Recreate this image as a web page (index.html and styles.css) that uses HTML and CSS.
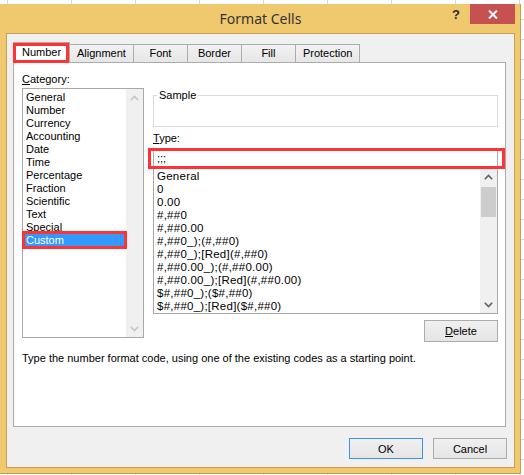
FILE: index.html
```html
<!DOCTYPE html>
<html lang="en">
<head>
<meta charset="utf-8">
<title>Format Cells</title>
<link rel="stylesheet" href="styles.css">
</head>
<body>
<div class="dialog">
  <div class="titlebar">
    <span class="title">Format Cells</span>
    <div class="caption-btns">
      <span class="help">?</span>
      <span class="close"><svg width="10" height="9" viewBox="0 0 10 9"><path d="M1 0.5 L9 8.5 M9 0.5 L1 8.5" stroke="#fff" stroke-width="2" fill="none"/></svg></span>
    </div>
  </div>
  <div class="client">
    <div class="tabs">
      <div class="tab active hl">Number</div>
      <div class="tab">Alignment</div>
      <div class="tab">Font</div>
      <div class="tab">Border</div>
      <div class="tab">Fill</div>
      <div class="tab">Protection</div>
    </div>
    <div class="panel">
      <div class="cols">
        <div class="col-left">
          <div class="label"><u>C</u>ategory:</div>
          <div class="listbox cat">
            <ul class="items">
              <li>General</li>
              <li>Number</li>
              <li>Currency</li>
              <li>Accounting</li>
              <li>Date</li>
              <li>Time</li>
              <li>Percentage</li>
              <li>Fraction</li>
              <li>Scientific</li>
              <li>Text</li>
              <li>Special</li>
              <li class="selected hl">Custom</li>
            </ul>
            <div class="vscroll disabled">
              <span class="arrow"><svg width="9" height="6" viewBox="0 0 9 6"><path d="M0.8 5.2 L4.5 1.5 L8.2 5.2" stroke="currentColor" stroke-width="1.6" fill="none"/></svg></span>
              <span class="track"></span>
              <span class="arrow"><svg width="9" height="6" viewBox="0 0 9 6"><path d="M0.8 0.8 L4.5 4.5 L8.2 0.8" stroke="currentColor" stroke-width="1.6" fill="none"/></svg></span>
            </div>
          </div>
        </div>
        <div class="col-right">
          <fieldset class="sample">
            <legend>Sample</legend>
            <div class="sample-body"></div>
          </fieldset>
          <div class="label type-label"><u>T</u>ype:</div>
          <div class="typeinput hl">;;;</div>
          <div class="listbox fmt">
            <ul class="items">
              <li>General</li>
              <li>0</li>
              <li>0.00</li>
              <li>#,##0</li>
              <li>#,##0.00</li>
              <li>#,##0_);(#,##0)</li>
              <li>#,##0_);[Red](#,##0)</li>
              <li>#,##0.00_);(#,##0.00)</li>
              <li>#,##0.00_);[Red](#,##0.00)</li>
              <li>$#,##0_);($#,##0)</li>
              <li>$#,##0_);[Red]($#,##0)</li>
            </ul>
            <div class="vscroll">
              <span class="arrow"><svg width="9" height="6" viewBox="0 0 9 6"><path d="M0.8 5.2 L4.5 1.5 L8.2 5.2" stroke="currentColor" stroke-width="1.6" fill="none"/></svg></span>
              <span class="track"><span class="thumb"></span></span>
              <span class="arrow"><svg width="9" height="6" viewBox="0 0 9 6"><path d="M0.8 0.8 L4.5 4.5 L8.2 0.8" stroke="currentColor" stroke-width="1.6" fill="none"/></svg></span>
            </div>
          </div>
          <div class="btnrow">
            <button class="btn"><u>D</u>elete</button>
          </div>
        </div>
      </div>
      <p class="hint">Type the number format code, using one of the existing codes as a starting point.</p>
    </div>
    <div class="footer">
      <button class="btn default">OK</button>
      <button class="btn">Cancel</button>
    </div>
  </div>
</div>
</body>
</html>
```

FILE: styles.css
```css
* { box-sizing: border-box; }
html, body { margin: 0; padding: 0; }
body {
  width: 524px;
  height: 475px;
  overflow: hidden;
  background-color: #fff;
  background-image:
    repeating-linear-gradient(90deg, transparent 0 7px, #d6d6d6 7px 8px, transparent 8px 64px),
    repeating-linear-gradient(180deg, transparent 0 19px, #d6d6d6 19px 20px);
  font-family: "Liberation Sans", Arial, sans-serif;
  font-size: 11px;
  color: #000;
}

.dialog {
  margin-top: 4px;
  width: 521px;
  height: 470px;
  background: #f0c96e;
  border-right: 1px solid #c4a050;
  border-bottom: 1px solid #c4a050;
  padding: 0 5px 5px 6px;
  display: flex;
  flex-direction: column;
}

.titlebar {
  height: 29px;
  flex: none;
  display: grid;
  grid-template-columns: 1fr auto 1fr;
}
.title {
  grid-column: 2;
  align-self: center;
  font-family: "Noto Sans", "Open Sans", sans-serif;
  font-size: 14px;
  line-height: 20px;
  color: #333;
}
.caption-btns {
  grid-column: 3;
  justify-self: end;
  display: flex;
  align-items: center;
  height: 20px;
}
.help {
  width: 20px;
  margin-right: 4px;
  text-align: center;
  font-weight: bold;
  font-size: 13px;
  color: #2b2b2b;
}
.close {
  width: 45px;
  height: 20px;
  background: #c75050;
  display: flex;
  align-items: center;
  justify-content: center;
}

.client {
  flex: 1;
  background: #f0f0f0;
  border: 1px solid #c4a050;
  padding: 8px 7px 0 6px;
  display: flex;
  flex-direction: column;
}

.tabs {
  display: flex;
  align-items: flex-end;
  height: 20px;
  position: relative;
  z-index: 1;
}
.tab {
  height: 18px;
  padding: 0 7px;
  min-width: 55px;
  border: 1px solid #acacac;
  border-bottom: none;
  margin-right: -1px;
  background: linear-gradient(#f2f2f2, #e6e6e6);
  line-height: 16px;
  text-align: center;
  white-space: nowrap;
}
.tab.active {
  height: 21px;
  min-width: 57px;
  margin-bottom: -1px;
  background: #fff;
  line-height: 19px;
  position: relative;
}

.hl { position: relative; }
.hl::after {
  content: "";
  position: absolute;
  border: 3px solid #f33;
  pointer-events: none;
}
.tab.hl::after { top: 0; left: -1px; right: 0; bottom: 0; }

.panel {
  height: 365px;
  flex: none;
  margin-right: 1px;
  background: #fff;
  border: 1px solid #acacac;
  padding: 9px 7px 0 8px;
}

.cols {
  display: grid;
  grid-template-columns: 122px 345px;
  column-gap: 9px;
  align-items: start;
}
.label {
  height: 14px;
  line-height: 14px;
  margin-bottom: 2px;
}

.listbox {
  display: flex;
  border: 1px solid #a8a8a8;
  background: #fff;
}
.items {
  list-style: none;
  margin: 0;
  padding: 2px 0 0 0;
  flex: 1;
  min-width: 0;
}
.items li {
  height: 13px;
  line-height: 13px;
  padding-left: 3px;
  white-space: nowrap;
}
.cat { height: 250px; }
.cat .selected { background: #3399ff; color: #fff; }
.cat .selected.hl::after { top: -3px; bottom: -2px; left: -1px; right: -1px; }

.vscroll {
  width: 17px;
  flex: none;
  background: #f0f0f0;
  display: flex;
  flex-direction: column;
  color: #606060;
}
.vscroll.disabled { color: #c5c5c5; }
.arrow {
  height: 17px;
  flex: none;
  display: flex;
  align-items: center;
  justify-content: center;
}
.track {
  flex: 1;
  padding: 2px 1px 0 1px;
}
.thumb {
  display: block;
  height: 30px;
  background: #cdcdcd;
}

.sample {
  margin: 16px 0 0 0;
  padding: 0 4px 0 3px;
  border: 1px solid #dcdcdc;
  min-inline-size: 0;
}
.sample legend {
  padding: 0 2px;
  line-height: 14px;
}
.sample-body { height: 24px; }

.type-label { margin-top: 4px; margin-bottom: 4px; }
.typeinput {
  height: 18px;
  border: 1px solid #abadb3;
  line-height: 16px;
  padding-left: 3px;
  background: #fff;
}
.typeinput.hl::after { top: -2px; left: -6px; right: -8px; bottom: -3px; }

.fmt { height: 147px; }
.fmt .items { overflow: hidden; }
.fmt .items li {
  font-size: 11.5px;
  letter-spacing: 0.25px;
}

.btnrow {
  display: flex;
  justify-content: flex-end;
  margin-top: 6px;
}
.btn {
  font-family: inherit;
  font-size: 11px;
  color: #000;
  width: 74px;
  height: 22px;
  border: 1px solid #acacac;
  background: linear-gradient(#f0f0f0, #e5e5e5);
  padding: 0;
  margin: 0;
}

.hint {
  margin: 9px 0 0 0;
  line-height: 14px;
}

.footer {
  display: flex;
  justify-content: flex-end;
  gap: 10px;
  margin-top: 11px;
}
.footer .btn { height: 21px; }
.btn.default { border-color: #3c93e8; }
```
